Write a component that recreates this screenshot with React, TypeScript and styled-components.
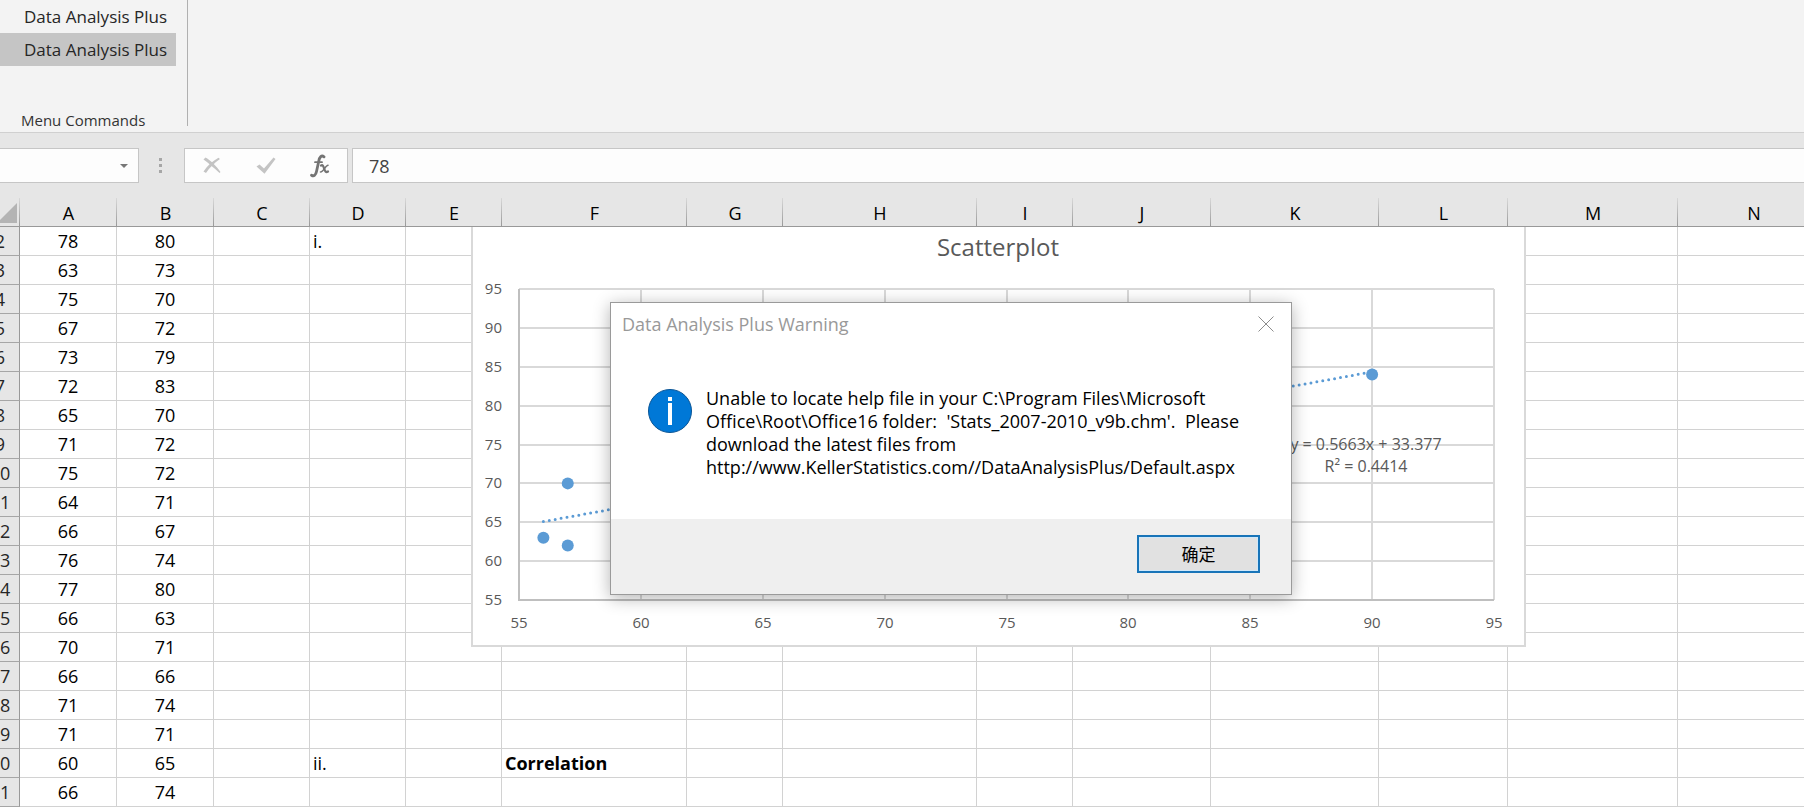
import React from "react";
import styled, { createGlobalStyle } from "styled-components";

const GlobalStyle = createGlobalStyle`
  * { box-sizing: border-box; }
  body {
    margin: 0;
    overflow: hidden;
    background: #fff;
    font-family: "Open Sans", "Noto Sans", "Noto Sans CJK SC", sans-serif;
    color: #000;
  }
  button, input { font: inherit; color: inherit; }
`;

const Page = styled.main`
  display: flex;
  flex-direction: column;
  min-height: 100vh;
`;

/* ---------- Ribbon ---------- */

const Ribbon = styled.header`
  display: flex;
  height: 133px;
  background: #f3f3f3;
  border-bottom: 1px solid #d0d0d0;
`;

const RibbonGroup = styled.section`
  display: flex;
  flex-direction: column;
  width: 188px;
  height: 126px;
  padding-right: 11px;
  border-right: 1px solid #b0b0b0;
`;

const RibbonCommand = styled.button<{ $active?: boolean }>`
  flex: none;
  width: 176px;
  height: 33px;
  padding: 0 0 0 24px;
  border: 0;
  background: ${(p) => (p.$active ? "#c5c5c5" : "transparent")};
  color: #262626;
  font-size: 17px;
  line-height: 33px;
  text-align: left;
`;

const GroupLabel = styled.h2`
  margin: auto 0 0;
  padding-left: 21px;
  color: #333;
  font-size: 15px;
  font-weight: 400;
  line-height: 12px;
`;

/* ---------- Formula bar ---------- */

const FormulaBar = styled.div`
  display: flex;
  align-items: center;
  height: 65px;
  background: #e6e6e6;
`;

const BarBox = styled.div`
  display: flex;
  align-items: center;
  height: 35px;
  background: #fdfdfd;
  border: 1px solid #c6c6c6;
`;

const NameBox = styled(BarBox)`
  width: 139px;
  border-left: 0;
`;

const BoxInput = styled.input`
  flex: 1;
  min-width: 0;
  height: 100%;
  padding: 0 0 0 16px;
  border: 0;
  outline: 0;
  background: transparent;
  color: #444;
  font-size: 18px;
`;

const IconButton = styled.button`
  display: flex;
  align-items: center;
  justify-content: center;
  width: 54px;
  height: 100%;
  padding: 0;
  border: 0;
  background: transparent;
`;

const DropButton = styled(IconButton)`
  width: 28px;
`;

const Grip = styled.div`
  display: flex;
  flex-direction: column;
  gap: 3px;
  margin: 0 22px 0 20px;

  i {
    width: 3px;
    height: 3px;
    background: #a6a6a6;
  }
`;

const FormulaButtons = styled(BarBox)`
  width: 164px;
  margin-right: 4px;
`;

const FormulaBox = styled(BarBox)`
  flex: 1;
  border-right: 0;
`;

/* ---------- Sheet ---------- */

const Sheet = styled.section`
  position: relative;
  flex: 1;
  overflow: hidden;
`;

const Grid = styled.table`
  width: calc(100% + 45px);
  margin-left: -19px;
  border-collapse: separate;
  border-spacing: 0;
  table-layout: fixed;
  font-size: 18px;
  line-height: 28px;
`;

const ColumnHead = styled.th`
  height: 29px;
  padding: 2px 0 0;
  border-bottom: 1px solid #999;
  background: linear-gradient(#d8d8d8, #999) right / 1px 100% no-repeat #e6e6e6;
  font-weight: 400;
  line-height: 26px;
`;

const Corner = styled(ColumnHead)`
  padding: 0 3px 3px 0;
  line-height: 0;
  text-align: right;
  vertical-align: bottom;
`;

const RowHead = styled.th`
  height: 29px;
  padding: 0;
  border-right: 1px solid #999;
  border-bottom: 1px solid #a6a6a6;
  background: #e6e6e6;
  color: #262626;
  font-weight: 400;
`;

const Cell = styled.td<{ $align?: "left" | "center"; $bold?: boolean }>`
  height: 29px;
  padding: 0 0 0 ${(p) => (p.$align === "left" ? "3px" : "0")};
  border-right: 1px solid #d2d2d2;
  border-bottom: 1px solid #d2d2d2;
  font-weight: ${(p) => (p.$bold ? 700 : 400)};
  text-align: ${(p) => p.$align ?? "center"};
  white-space: nowrap;
`;

const columns: { name: string; width?: number }[] = [
  { name: "A", width: 97 },
  { name: "B", width: 97 },
  { name: "C", width: 96 },
  { name: "D", width: 96 },
  { name: "E", width: 96 },
  { name: "F", width: 185 },
  { name: "G", width: 96 },
  { name: "H", width: 194 },
  { name: "I", width: 96 },
  { name: "J", width: 138 },
  { name: "K", width: 168 },
  { name: "L", width: 129 },
  { name: "M", width: 170 },
  { name: "N" },
];

const scores: [number, number][] = [
  [78, 80], [63, 73], [75, 70], [67, 72], [73, 79],
  [72, 83], [65, 70], [71, 72], [75, 72], [64, 71],
  [66, 67], [76, 74], [77, 80], [66, 63], [70, 71],
  [66, 66], [71, 74], [71, 71], [60, 65], [66, 74],
];

const FIRST_ROW = 2;

const notes: Record<string, { text: string; bold?: boolean }> = {
  D2: { text: "i." },
  D20: { text: "ii." },
  F20: { text: "Correlation", bold: true },
};

function Spreadsheet() {
  return (
    <Grid>
      <colgroup>
        <col width={39} />
        {columns.map((c) => (
          <col key={c.name} width={c.width} />
        ))}
      </colgroup>
      <thead>
        <tr>
          <Corner aria-label="Select all">
            <svg width="20" height="20" viewBox="0 0 20 20" aria-hidden="true">
              <path d="M20 0V20H0Z" fill="#b4b4b4" />
            </svg>
          </Corner>
          {columns.map((c) => (
            <ColumnHead key={c.name} scope="col">{c.name}</ColumnHead>
          ))}
        </tr>
      </thead>
      <tbody>
        {scores.map(([a, b], i) => {
          const row = i + FIRST_ROW;
          return (
            <tr key={row}>
              <RowHead scope="row">{row}</RowHead>
              <Cell>{a}</Cell>
              <Cell>{b}</Cell>
              {columns.slice(2).map((c) => {
                const note = notes[c.name + row];
                return (
                  <Cell key={c.name} $align="left" $bold={note?.bold}>
                    {note?.text}
                  </Cell>
                );
              })}
            </tr>
          );
        })}
      </tbody>
    </Grid>
  );
}

/* ---------- Chart ---------- */

const ChartFrame = styled.figure`
  position: absolute;
  top: 29px;
  left: 471px;
  width: 1055px;
  margin: 0;
  border: 2px solid #d9d9d9;
  border-top: 0;
  background: #fff;
  line-height: 0;
`;

const ChartText = styled.text<{ $size?: number }>`
  fill: #595959;
  font-size: ${(p) => p.$size ?? 15}px;
`;

const ticks = [55, 60, 65, 70, 75, 80, 85, 90, 95];
const points: [number, number][] = [[56, 63], [57, 62], [57, 70], [90, 84]];
const px = (x: number) => 46 + ((x - 55) / 40) * 975;
const py = (y: number) => 373 - ((y - 55) / 40) * 311;
const fit = (x: number) => 0.5663 * x + 33.377;

function Scatterplot() {
  return (
    <ChartFrame aria-label="Scatterplot">
      <svg width="1051" height="418" viewBox="0 0 1051 418">
        <ChartText x="525" y="29" $size={24} textAnchor="middle">Scatterplot</ChartText>
        <g stroke="#d9d9d9" strokeWidth="2" shapeRendering="crispEdges">
          {ticks.slice(1).map((t) => (
            <path key={t} d={`M${px(55)} ${Math.round(py(t))}H${px(95)}M${Math.round(px(t))} ${py(95)}V${py(55)}`} />
          ))}
        </g>
        <path
          d={`M${px(55)} ${py(95)}V${py(55)}H${px(95)}`}
          fill="none"
          stroke="#bfbfbf"
          strokeWidth="2"
          shapeRendering="crispEdges"
        />
        <path
          d={`M${px(56)} ${py(fit(56))}L${px(90)} ${py(fit(90))}`}
          stroke="#5b9bd5"
          strokeWidth="3"
          strokeLinecap="round"
          strokeDasharray="0 6"
        />
        {points.map(([x, y]) => (
          <circle key={`${x}-${y}`} cx={px(x)} cy={py(y)} r="6" fill="#5b9bd5" />
        ))}
        {ticks.map((t) => (
          <React.Fragment key={t}>
            <ChartText x="29" y={Math.round(py(t)) + 5} textAnchor="end">{t}</ChartText>
            <ChartText x={Math.round(px(t))} y="401" textAnchor="middle">{t}</ChartText>
          </React.Fragment>
        ))}
        <ChartText x="893" y="223" $size={16} textAnchor="middle">y = 0.5663x + 33.377</ChartText>
        <ChartText x="893" y="245" $size={16} textAnchor="middle">R² = 0.4414</ChartText>
      </svg>
    </ChartFrame>
  );
}

/* ---------- Warning dialog ---------- */

const Dialog = styled.div`
  position: absolute;
  top: 104px;
  left: 610px;
  display: flex;
  flex-direction: column;
  width: 682px;
  border: 1px solid #9a9a9a;
  background: #fff;
  box-shadow: 0 3px 16px rgba(0, 0, 0, 0.3);
`;

const TitleBar = styled.div`
  display: flex;
  align-items: center;
  justify-content: space-between;
  height: 42px;
  padding-left: 11px;
`;

const DialogTitle = styled.h1`
  margin: 0;
  color: #999;
  font-size: 18px;
  font-weight: 400;
`;

const CloseButton = styled(IconButton)`
  width: 50px;
`;

const DialogBody = styled.div`
  display: flex;
  align-items: flex-start;
  gap: 14px;
  height: 174px;
  padding: 42px 20px 0 37px;
`;

const InfoIcon = styled.svg`
  flex: none;
  margin-top: 2px;
`;

const Message = styled.p`
  margin: 0;
  font-size: 18px;
  line-height: 23px;
  white-space: pre;
`;

const DialogFooter = styled.div`
  display: flex;
  justify-content: flex-end;
  height: 75px;
  padding: 16px 31px 0;
  background: #efefef;
`;

const OkButton = styled.button`
  width: 123px;
  height: 38px;
  padding: 0;
  border: 2px solid #1874b8;
  background: #e1e1e1;
  box-shadow: inset 0 0 0 1px #cfe8fa;
  font-family: "Noto Sans CJK SC", sans-serif;
  font-size: 17px;
  line-height: 32px;
`;

const message = [
  "Unable to locate help file in your C:\\Program Files\\Microsoft",
  "Office\\Root\\Office16 folder:  'Stats_2007-2010_v9b.chm'.  Please",
  "download the latest files from",
  "http://www.KellerStatistics.com//DataAnalysisPlus/Default.aspx",
].join("\n");

function WarningDialog() {
  return (
    <Dialog role="alertdialog" aria-labelledby="warning-title" aria-describedby="warning-text">
      <TitleBar>
        <DialogTitle id="warning-title">Data Analysis Plus Warning</DialogTitle>
        <CloseButton type="button" aria-label="Close">
          <svg width="16" height="16" viewBox="0 0 16 16">
            <path d="M.5.5 15.5 15.5M15.5.5.5 15.5" stroke="#8c8c8c" />
          </svg>
        </CloseButton>
      </TitleBar>
      <DialogBody>
        <InfoIcon width="44" height="44" viewBox="0 0 44 44" aria-hidden="true">
          <circle cx="22" cy="22" r="21.5" fill="#0078d7" stroke="#0a5596" />
          <path d="M20 8h4v4h-4zM20 14h4v22h-4z" fill="#fff" />
        </InfoIcon>
        <Message id="warning-text">{message}</Message>
      </DialogBody>
      <DialogFooter>
        <OkButton type="button">确定</OkButton>
      </DialogFooter>
    </Dialog>
  );
}

export default function App() {
  return (
    <Page>
      <GlobalStyle />
      <Ribbon>
        <RibbonGroup aria-labelledby="menu-commands">
          <RibbonCommand type="button">Data Analysis Plus</RibbonCommand>
          <RibbonCommand type="button" $active>Data Analysis Plus</RibbonCommand>
          <GroupLabel id="menu-commands">Menu Commands</GroupLabel>
        </RibbonGroup>
      </Ribbon>
      <FormulaBar>
        <NameBox>
          <BoxInput aria-label="Name box" />
          <DropButton type="button" aria-label="Open name list">
            <svg width="8" height="4" viewBox="0 0 8 4">
              <path d="M0 0H8L4 4Z" fill="#777" />
            </svg>
          </DropButton>
        </NameBox>
        <Grip><i /><i /><i /></Grip>
        <FormulaButtons>
          <IconButton type="button" aria-label="Cancel">
            <svg width="18" height="17" viewBox="0 0 18 17" fill="#c4c4c4">
              <path d="M.5 2.500 2.500.5C7 3 13.500 9 17.500 15L16.500 16C11 11 6 6.500.5 2.500Z" />
              <path d="M15.500.8 17 2C11.500 6 6.500 10.500 3 16L.5 14.500C4.500 8.500 9.500 4 15.500.8Z" />
            </svg>
          </IconButton>
          <IconButton type="button" aria-label="Enter">
            <svg width="20" height="17" viewBox="0 0 20 17">
              <path d="M.5 9.500 3.500 7.500 8 11.500 17.500.5 19.500 2 8.500 16.800Z" fill="#c4c4c4" />
            </svg>
          </IconButton>
          <IconButton type="button" aria-label="Insert function">
            <svg width="20" height="24" viewBox="0 0 20 24" fill="none" stroke="#747474" strokeLinecap="round">
              <path d="M14 2.800C11.500.8 9.600 3 8.800 7L6.500 17.500C5.800 21 4 22.800 1.500 21.200" strokeWidth="2.800" />
              <path d="M5 8.200H12" strokeWidth="1.800" />
              <path d="M11 11.500C13 10.500 13.500 12.500 14.300 15S15.800 18.800 18 17.500" strokeWidth="2.300" />
              <path d="M18 11.200C15.500 11.200 13.500 18 10.500 18" strokeWidth="1.600" />
            </svg>
          </IconButton>
        </FormulaButtons>
        <FormulaBox>
          <BoxInput aria-label="Formula bar" defaultValue="78" />
        </FormulaBox>
      </FormulaBar>
      <Sheet>
        <Spreadsheet />
        <Scatterplot />
        <WarningDialog />
      </Sheet>
    </Page>
  );
}
